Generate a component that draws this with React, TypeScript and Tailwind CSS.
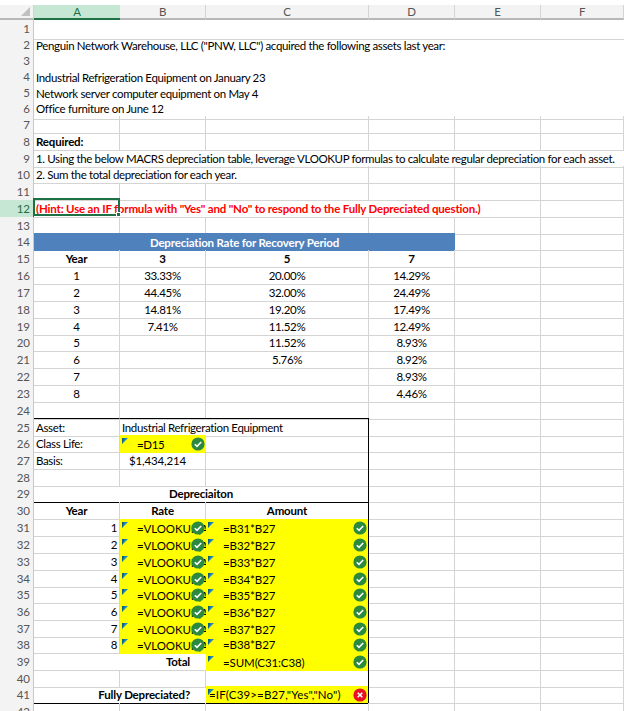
type Cell = {
  t?: string
  c?: string
  mark?: boolean
  ok?: boolean
  bad?: boolean
}

const heights = [
  16, 16, 16, 16, 16, 16, 17, 17, 16, 17, 17, 17, 16, 17, 17, 17, 17, 17, 16, 17, 17, 17, 17, 16, 17, 17, 17, 16, 17, 17, 17,
  17, 17, 16, 17, 17, 16, 17, 17, 16, 17, 17,
]

const grid = 'border-r border-b border-[#d4d4d4]'
const bottom = 'border-b border-[#d4d4d4]'
const center = 'justify-center'
const bold = 'font-bold tracking-[-0.18px]'
const yellow = 'bg-[#ffff00]'
const formula = 'tracking-[-0.1px]'
const raised = 'pb-[2px]'

function CheckIcon({ bad }: { bad?: boolean }) {
  return (
    <svg viewBox="0 0 14 14" className="absolute top-1/2 right-[1px] z-10 h-[14px] w-[14px] -translate-y-1/2">
      {bad ? (
        <>
          <circle cx="7" cy="7" r="6.6" fill="#e81123" />
          <path d="M4.7 4.7l4.6 4.6M9.3 4.7l-4.6 4.6" stroke="#fff" strokeWidth="1.6" fill="none" />
        </>
      ) : (
        <>
          <circle cx="7" cy="7" r="6.6" fill="#2b8a3e" />
          <path d="M3.8 7.2l2.2 2.2 4.2-4.4" stroke="#fff" strokeWidth="1.6" fill="none" />
        </>
      )}
    </svg>
  )
}

function Marker() {
  return (
    <svg viewBox="0 0 6 6" className="absolute top-[3px] left-[2px] z-10 h-[6px] w-[6px]">
      <path d="M0 0h6L0 6z" fill="#1b86c4" />
      <path d="M0 0h2.5L0 6z" fill="#14607a" />
    </svg>
  )
}

function SpreadCell({ cell }: { cell: Cell }) {
  return (
    <div className={`relative flex min-w-0 items-center whitespace-nowrap px-[2px] ${cell.c ?? grid}`}>
      {cell.mark && <Marker />}
      {cell.t}
      {(cell.ok || cell.bad) && <CheckIcon bad={cell.bad} />}
    </div>
  )
}

const blank = (): Cell[] => [{}, {}, {}, {}, {}, {}]

const rate = (a: string, b?: string, c?: string, d?: string): Cell[] => [
  { t: a, c: `${grid} ${center}` },
  { t: b, c: `${grid} ${center}` },
  { t: c, c: `${grid} ${center}` },
  { t: d, c: `${grid} ${center}` },
  {},
  {},
]

const dep = (n: number): Cell[] => [
  { t: String(n), c: `${grid} justify-end` },
  { t: '=VLOOKUP(A' + (30 + n) + ',$A$15:$D$23', c: `${yellow} ${formula} pl-[17px] overflow-hidden`, mark: true, ok: true },
  {
    t: `=B${30 + n}*B27`,
    c: `${yellow} ${formula} pl-[17px] border-r border-r-black ${n === 8 ? 'border-b border-b-black' : ''}`,
    mark: true,
    ok: true,
  },
  {},
  {},
  {},
]

const rows: Cell[][] = [
  [{ c: `col-span-6 ${bottom}` }],
  [{ t: 'Penguin Network Warehouse, LLC ("PNW, LLC") acquired the following assets last year:', c: `col-span-6 ${raised}` }],
  [{ c: 'col-span-6' }],
  [{ t: 'Industrial Refrigeration Equipment on January 23', c: `col-span-6 ${raised}` }],
  [{ t: 'Network server computer equipment on May 4', c: `col-span-6 ${raised}` }],
  [{ t: 'Office furniture on June 12', c: `col-span-6 ${raised} ${bottom}` }],
  blank(),
  [{ t: 'Required:', c: `${grid} ${bold}` }, {}, {}, {}, {}, {}],
  [{ t: '1. Using the below MACRS depreciation table, leverage VLOOKUP formulas to calculate regular depreciation for each asset.', c: `col-span-6 ${bottom}` }],
  [{ t: '2. Sum the total depreciation for each year.', c: `col-span-3 ${grid}` }, {}, {}, {}],
  blank(),
  [{ t: '(Hint: Use an IF formula with "Yes" and "No" to respond to the Fully Depreciated question.)', c: `col-span-5 ${grid} ${bold} text-[#ff0000]` }, {}],
  blank(),
  [{ t: 'Depreciation Rate for Recovery Period', c: `col-span-4 ${center} ${bold} bg-[#4f81bd] text-white` }, {}, {}],
  [
    { t: 'Year', c: `${grid} ${center} ${bold}` },
    { t: '3', c: `${grid} ${center} ${bold}` },
    { t: '5', c: `${grid} ${center} ${bold}` },
    { t: '7', c: `${grid} ${center} ${bold}` },
    {},
    {},
  ],
  rate('1', '33.33%', '20.00%', '14.29%'),
  rate('2', '44.45%', '32.00%', '24.49%'),
  rate('3', '14.81%', '19.20%', '17.49%'),
  rate('4', '7.41%', '11.52%', '12.49%'),
  rate('5', undefined, '11.52%', '8.93%'),
  rate('6', undefined, '5.76%', '8.92%'),
  rate('7', undefined, undefined, '8.93%'),
  rate('8', undefined, undefined, '4.46%'),
  blank(),
  [
    { t: 'Asset:', c: `${grid} border-t border-t-black` },
    { t: 'Industrial Refrigeration Equipment', c: `col-span-2 border-t border-t-black border-r border-r-black border-b border-b-[#d4d4d4]` },
    {},
    {},
    {},
  ],
  [
    { t: 'Class Life:', c: grid },
    { t: '=D15', c: `${yellow} pl-[17px]`, mark: true, ok: true },
    { c: `${bottom} border-r border-r-black` },
    {},
    {},
    {},
  ],
  [
    { t: 'Basis:', c: grid },
    { t: '$1,434,214', c: `${grid} pl-[9px] tracking-[-0.15px]` },
    { c: `${bottom} border-r border-r-black` },
    {},
    {},
    {},
  ],
  [{ c: grid }, { c: grid }, { c: `${bottom} border-r border-r-black` }, {}, {}, {}],
  [
    { t: 'Depreciaiton', c: `col-span-3 ${center} ${bold} border-b border-b-black border-r border-r-black` },
    {},
    {},
    {},
  ],
  [
    { t: 'Year', c: `${grid} ${center} ${bold}` },
    { t: 'Rate', c: `${grid} ${center} ${bold}` },
    { t: 'Amount', c: `${bottom} border-r border-r-black ${center} ${bold}` },
    {},
    {},
    {},
  ],
  dep(1),
  dep(2),
  dep(3),
  dep(4),
  dep(5),
  dep(6),
  dep(7),
  dep(8),
  [
    { t: 'Total', c: `col-span-2 ${bottom} justify-end pr-[16px] ${bold}` },
    { t: '=SUM(C31:C38)', c: `${yellow} ${formula} pl-[17px] border-r border-r-black`, mark: true, ok: true },
    {},
    {},
    {},
  ],
  [{ c: grid }, { c: grid }, { c: `${bottom} border-r border-r-black` }, {}, {}, {}],
  [
    { t: 'Fully Depreciated?', c: `col-span-2 border-b border-b-black justify-end pr-[16px] ${bold}` },
    { t: '=IF(C39>=B27,"Yes","No")', c: `${yellow} tracking-[0.15px] pl-[3px] border-r border-r-black border-b border-b-black`, mark: true, bad: true },
    {},
    {},
    {},
  ],
  blank(),
]

const columns = ['A', 'B', 'C', 'D', 'E', 'F']

export default function App() {
  return (
    <div className="h-[711px] w-[624px] overflow-hidden bg-white pt-[5px] font-['Lato',sans-serif] text-[11.5px] tracking-[-0.35px] text-black">
      <div className="relative grid grid-cols-[34px_86px_86px_163px_86px_86px_83px]">
        <div className="relative h-[15px] border-r border-b-2 border-r-[#d4d4d4] border-b-[#b8b8b8] bg-[#f3f3f3]">
          <div className="absolute right-[3px] bottom-[2px] h-0 w-0 border-t-[9px] border-r-[9px] border-t-transparent border-r-[#c0c0c0]" />
        </div>
        {columns.map((col, i) => (
          <div
            key={col}
            className={
              i === 0
                ? 'flex h-[15px] items-center justify-center border-b-2 border-b-[#1e7145] bg-[#c6e7d3] text-[#1e7145]'
                : 'flex h-[15px] items-center justify-center border-r border-b-2 border-r-[#d4d4d4] border-b-[#b8b8b8] bg-[#f3f3f3] text-[#555555]'
            }
          >
            {col}
          </div>
        ))}
      </div>
      <div className="relative">
        {rows.map((row, i) => (
          <div
            key={i}
            className="grid grid-cols-[34px_86px_86px_163px_86px_86px_83px]"
            style={{ height: heights[i] }}
          >
            <div
              className={
                i === 11
                  ? 'flex items-center justify-end border-r border-b border-r-[#1e7145] border-b-[#d4d4d4] bg-[#c6e7d3] pr-[3px] tracking-normal text-[#1e7145]'
                  : `flex items-center justify-end border-r border-b border-[#c8c8c8] bg-[#f3f3f3] pr-[3px] tracking-normal text-[#555555] ${i < 6 ? raised : ''}`
              }
            >
              {i + 1}
            </div>
            {row.map((cell, j) => (
              <SpreadCell key={j} cell={cell} />
            ))}
          </div>
        ))}
        <div className="absolute top-[178px] left-[33px] z-20 h-[18px] w-[87px] border-2 border-[#1e7145]">
          <div className="absolute -right-[3px] -bottom-[3px] h-[5px] w-[5px] border border-white bg-[#1e7145]" />
        </div>
      </div>
    </div>
  )
}
